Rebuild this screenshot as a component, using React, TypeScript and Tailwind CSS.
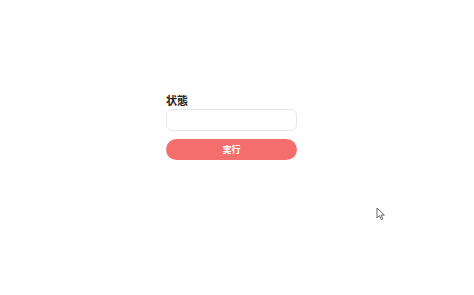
import React from "react";

const Cursor = () => (
  <svg
    className="absolute left-[376px] top-[207px]"
    width="10"
    height="14"
    viewBox="0 0 10 14"
  >
    <path
      d="M1 1 L1 11 L3.5 8.6 L5.3 12.6 L6.8 11.9 L5.1 8.1 L8.4 8.1 Z"
      fill="#fff"
      stroke="#555"
      strokeWidth="0.9"
      strokeLinejoin="round"
    />
  </svg>
);

export default function App() {
  return (
    <div
      className="relative h-[295px] w-[474px] bg-white"
      style={{ fontFamily: '"Noto Sans CJK JP", "Noto Sans", sans-serif' }}
    >
      <div className="ml-[166px] flex w-[131px] flex-col pt-[92px]">
        <label className="text-[11px] font-bold leading-[16px] text-[#222]">
          状態
        </label>
        <input
          type="text"
          className="mt-[1px] h-[22px] w-full rounded-[6px] border border-[#e8e8ec] bg-white px-2 text-[11px] outline-none"
        />
        <button
          type="button"
          className="mt-[8px] flex h-[21px] w-full items-center justify-center rounded-full bg-[#f56e6e] text-[9px] font-bold text-white"
        >
          実行
        </button>
      </div>
      <Cursor />
    </div>
  );
}
